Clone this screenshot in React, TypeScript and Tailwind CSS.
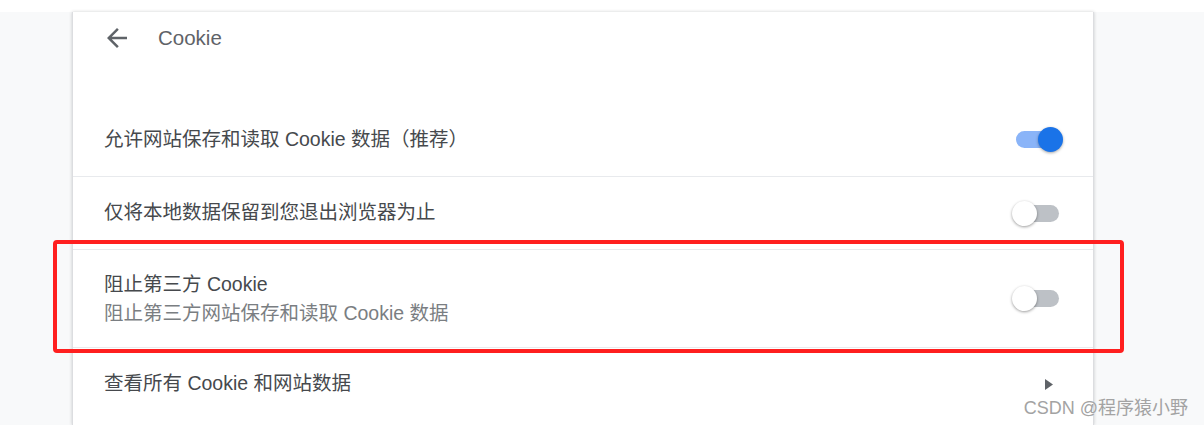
import React from "react";

function Toggle({ on }: { on: boolean }) {
  return (
    <div className="relative h-[25px] w-[51px] shrink-0">
      <div
        className={
          on
            ? "absolute left-[4px] top-[4px] h-[17px] w-[44px] rounded-full bg-[#8ab4f8]"
            : "absolute left-[4px] top-[4px] h-[17px] w-[43px] rounded-full bg-[#bdc1c6]"
        }
      />
      <div
        className={
          on
            ? "absolute right-0 top-0 h-[25px] w-[25px] rounded-full bg-[#1a73e8] shadow-[0_1px_3px_rgba(0,0,0,0.35)]"
            : "absolute left-0 top-0 h-[25px] w-[25px] rounded-full bg-white shadow-[0_1px_3px_rgba(0,0,0,0.4)]"
        }
      />
    </div>
  );
}

export default function App() {
  return (
    <div className="relative h-[425px] w-[1204px] overflow-hidden bg-white font-['Liberation_Sans','Noto_Sans_CJK_SC',sans-serif]">
      <div className="mt-[12px] flex h-[413px] bg-[#f8f9fa] pl-[72px]">
        <div className="flex w-[1022px] flex-col border-x border-[#dcdde0] bg-white shadow-[0_0_3px_rgba(60,64,67,0.25)]">
          <div className="flex h-[52px] items-center pl-[29px]">
            <svg width="30" height="30" viewBox="0 0 24 24" fill="#5f6368" aria-hidden="true">
              <path d="M20 11H7.83l5.59-5.59L12 4l-8 8 8 8 1.41-1.41L7.83 13H20v-2z" />
            </svg>
            <span className="ml-[26px] text-[20.5px] text-[#5f6368]">Cookie</span>
          </div>
          <div className="h-[39px]" />

          <div className="flex h-[73px] items-center justify-between pl-[31px] pr-[30px]">
            <span className="text-[19.5px] text-[#46494d]">允许网站保存和读取 Cookie 数据（推荐）</span>
            <Toggle on />
          </div>

          <div className="flex h-[73px] items-center justify-between border-t border-[#e8eaed] pl-[31px] pr-[30px]">
            <span className="text-[19.5px] text-[#46494d]">仅将本地数据保留到您退出浏览器为止</span>
            <Toggle on={false} />
          </div>

          <div className="flex h-[98px] items-center justify-between border-t border-[#e8eaed] pl-[31px] pr-[30px]">
            <div className="flex flex-col">
              <span className="text-[19.5px] leading-[29px] text-[#46494d]">阻止第三方 Cookie</span>
              <span className="text-[19.5px] leading-[29px] text-[#7a7e82]">阻止第三方网站保存和读取 Cookie 数据</span>
            </div>
            <Toggle on={false} />
          </div>

          <div className="flex h-[73px] items-center justify-between border-t border-[#e8eaed] pl-[31px] pr-[40px]">
            <span className="text-[19.5px] text-[#46494d]">查看所有 Cookie 和网站数据</span>
            <svg width="8" height="11" viewBox="0 0 8 11" aria-hidden="true">
              <polygon points="0,0 8,5.5 0,11" fill="#5f6368" />
            </svg>
          </div>
        </div>
      </div>

      <div className="absolute left-[53px] top-[240px] h-[113px] w-[1071px] rounded-[4px] border-[4px] border-[#ff1f1f]" />

      <div className="absolute right-[16px] top-[396px] text-[18px] font-normal leading-[24px] text-[#a3a3a3]">
        CSDN @程序猿小野
      </div>
    </div>
  );
}
